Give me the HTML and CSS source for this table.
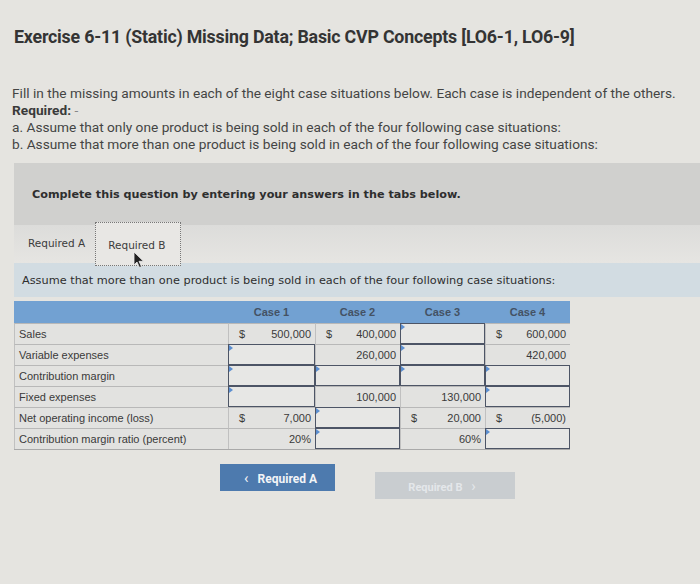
FILE: index.html
```html
<!DOCTYPE html>
<html>
<head>
<meta charset="utf-8">
<link rel="stylesheet" href="styles.css">
</head>
<body>
<div class="page">
  <h1 class="title">Exercise 6-11 (Static) Missing Data; Basic CVP Concepts [LO6-1, LO6-9]</h1>
  <p class="intro">Fill in the missing amounts in each of the eight case situations below. Each case is independent of the others.</p>
  <div class="req">
    <div class="req-head">Required: <span class="dot">-</span></div>
    <div>a. Assume that only one product is being sold in each of the four following case situations:</div>
    <div>b. Assume that more than one product is being sold in each of the four following case situations:</div>
  </div>
  <div class="complete">Complete this question by entering your answers in the tabs below.</div>
  <div class="tabs">
    <div class="tab">Required A</div>
    <div class="tab active">Required B
      <svg class="cursor" width="12" height="18" viewBox="0 0 12 18"><path d="M1 1 L1 14 L4 11 L6.5 16.5 L8.5 15.6 L6 10.3 L10.5 10.3 Z" fill="#222" stroke="#eee" stroke-width="0.8"/></svg>
    </div>
  </div>
  <div class="prompt">Assume that more than one product is being sold in each of the four following case situations:</div>
  <div class="grid">
    <div class="hd"></div>
    <div class="hd">Case 1</div>
    <div class="hd">Case 2</div>
    <div class="hd">Case 3</div>
    <div class="hd">Case 4</div>

    <div class="lbl">Sales</div>
    <div class="val"><span>$</span><span>500,000</span></div>
    <div class="val"><span>$</span><span>400,000</span></div>
    <div class="inp"></div>
    <div class="val"><span>$</span><span>600,000</span></div>

    <div class="lbl">Variable expenses</div>
    <div class="inp"></div>
    <div class="val"><span></span><span>260,000</span></div>
    <div class="inp"></div>
    <div class="val"><span></span><span>420,000</span></div>

    <div class="lbl">Contribution margin</div>
    <div class="inp"></div>
    <div class="inp"></div>
    <div class="inp"></div>
    <div class="inp"></div>

    <div class="lbl">Fixed expenses</div>
    <div class="inp"></div>
    <div class="val"><span></span><span>100,000</span></div>
    <div class="val"><span></span><span>130,000</span></div>
    <div class="inp"></div>

    <div class="lbl">Net operating income (loss)</div>
    <div class="val"><span>$</span><span>7,000</span></div>
    <div class="inp"></div>
    <div class="val"><span>$</span><span>20,000</span></div>
    <div class="val"><span>$</span><span>(5,000)</span></div>

    <div class="lbl">Contribution margin ratio (percent)</div>
    <div class="val"><span></span><span>20%</span></div>
    <div class="inp"></div>
    <div class="val"><span></span><span>60%</span></div>
    <div class="inp"></div>
  </div>
  <div class="nav">
    <button class="btn prev"><span class="chev">&lsaquo;</span> Required A</button>
    <button class="btn next">Required B <span class="chev">&rsaquo;</span></button>
  </div>
</div>
</body>
</html>
```
FILE: styles.css
```css
html, body {
  margin: 0;
  padding: 0;
  background: #e5e4e0;
}
.page {
  width: 700px;
  height: 584px;
  overflow: hidden;
  font-family: "Roboto", "Liberation Sans", sans-serif;
  color: #3a3a3a;
}
.title {
  margin: 0;
  padding: 26px 0 0 14px;
  font-size: 17.8px;
  font-weight: 700;
  color: #343434;
  letter-spacing: -0.2px;
}
.intro {
  margin: 0;
  padding: 38px 0 0 12px;
  font-size: 13.7px;
  color: #444;
}
.req {
  padding: 1px 0 0 12px;
  font-size: 13.7px;
  line-height: 17px;
  color: #444;
}
.req-head {
  font-weight: 700;
  color: #3a3a3a;
}
.dot { font-weight: 400; color: #888; }
.complete {
  margin: 10px 0 0 14px;
  background: #d0d0ce;
  height: 62px;
  padding: 0 0 0 18px;
  display: flex;
  align-items: center;
  font-family: "DejaVu Sans", sans-serif;
  font-size: 11.2px;
  font-weight: 700;
  color: #2e2e2e;
}
.tabs {
  margin-left: 14px;
  display: flex;
  align-items: flex-start;
  height: 38px;
  background: linear-gradient(#dcdcda, #e6e5e2);
  font-family: "DejaVu Sans", sans-serif;
  font-size: 10.5px;
  color: #3c3c3c;
}
.tab {
  padding: 12px 10px 0 14px;
  height: 26px;
}
.tab.active {
  position: relative;
  margin-top: -3px;
  height: 44px;
  padding: 16px 10px 0 12px;
  box-sizing: border-box;
  border: 1.5px dotted #777;
  background: #e8e7e4;
  width: 86px;
}
.cursor {
  position: absolute;
  left: 37px;
  top: 28px;
}
.prompt {
  margin-left: 14px;
  height: 34px;
  display: flex;
  align-items: center;
  padding-left: 8px;
  background: #d2dce2;
  font-family: "DejaVu Sans", sans-serif;
  font-size: 11.3px;
  color: #2e2e2e;
}
.grid {
  margin: 4px 0 0 14px;
  width: 556px;
  display: grid;
  grid-template-columns: 214px 87px 85px 85px 85px;
  grid-auto-rows: 21px;
  grid-template-rows: 22px;
  font-family: "Liberation Sans", Arial, sans-serif;
  font-size: 11px;
  color: #3a3a3a;
  background: #e2e2e0;
  border-bottom: 1px solid #a9a9a9;
}
.hd {
  background: #72a1d2;
  color: #445264;
  font-weight: 700;
  text-align: center;
  line-height: 22px;
  font-size: 11px;
}
.lbl {
  padding-left: 4px;
  line-height: 21px;
  border-top: 1px solid #b8b8b8;
  border-left: 1px solid #c0c0c0;
  box-sizing: border-box;
}
.val {
  display: flex;
  justify-content: space-between;
  align-items: center;
  padding: 0 4px 0 10px;
  border-top: 1px solid #b8b8b8;
  border-left: 1px solid #c0c0c0;
  box-sizing: border-box;
}
.inp {
  position: relative;
  border: 1.5px solid #4d5566;
  background: #e7e7e5;
  box-sizing: border-box;
}
.inp::before {
  content: "";
  position: absolute;
  left: 0;
  top: 0;
  border-left: 4px solid #5b8ed0;
  border-top: 3px solid transparent;
  border-bottom: 3px solid transparent;
}
.nav {
  display: flex;
  gap: 40px;
  margin: 14px 0 0 220px;
  align-items: flex-start;
}
.btn {
  border: none;
  height: 27px;
  font-family: "Roboto", "Liberation Sans", sans-serif;
  font-size: 12px;
  font-weight: 700;
  padding: 0;
}
.prev {
  width: 115px;
  background: #4d7aae;
  color: #f2f4f7;
}
.next {
  width: 140px;
  margin-top: 8px;
  background: #c9cdd0;
  color: #e4e7ea;
  font-size: 11px;
}
.chev {
  font-size: 15px;
  font-weight: 400;
  margin: 0 6px;
}
```
